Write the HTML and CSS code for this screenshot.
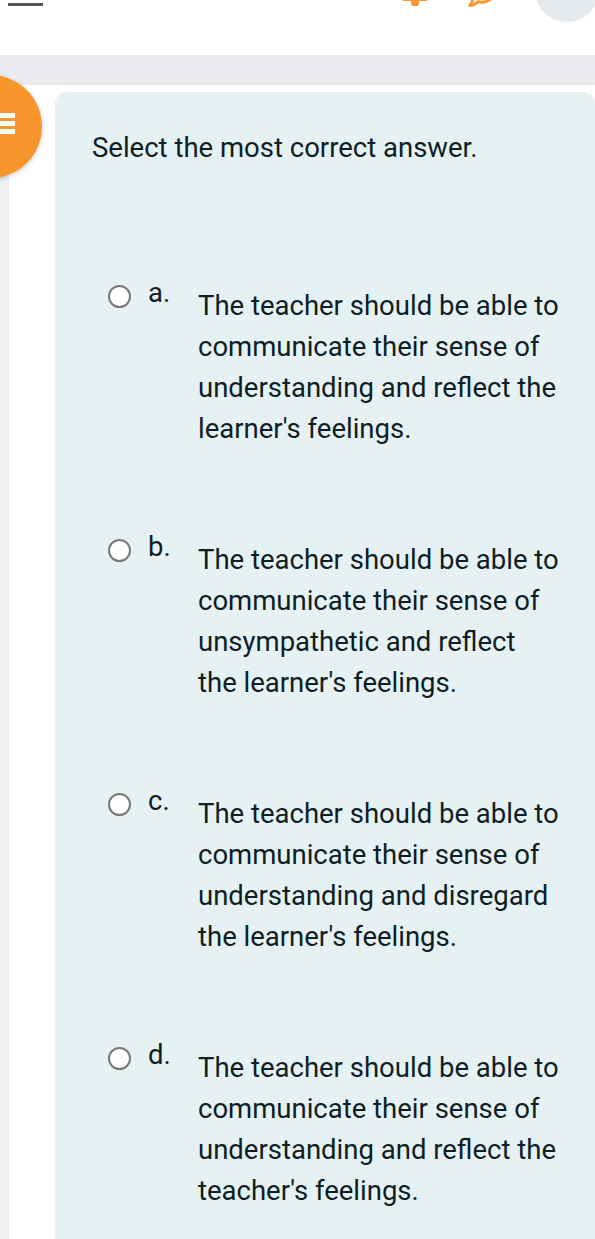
FILE: index.html
```html
<!DOCTYPE html>
<html lang="en">
<head>
  <meta charset="UTF-8">
  <meta name="viewport" content="width=device-width, initial-scale=1.0">
  <title>Quiz question</title>
  <link rel="stylesheet" href="styles.css">
</head>
<body>
  <header class="topbar">
    <div class="topbar-row">
      <div class="menu-btn">
        <span></span><span></span><span></span>
      </div>
      <div class="top-icons">
        <!-- bell -->
        <svg class="bell" width="28" height="28" viewBox="0 0 28 28">
          <path d="M14 2c-5 0-8 3.6-8 8.5v6.5l-4 4.5v1.5h24v-1.5l-4-4.5v-6.5c0-4.9-3-8.5-8-8.5z" fill="#f7962d"/>
          <rect x="10" y="22" width="8" height="6" rx="3" fill="#f7962d"/>
        </svg>
        <!-- chat -->
        <svg class="chat" width="31" height="28" viewBox="0 0 31 28">
          <path d="M4 26.5c1.5-2 2.6-4 2.8-6.2C4.4 18.4 3 15.6 3 12.6 3 6.5 8.6 2 15.5 2S28 6.5 28 12.6 22.4 23.2 15.5 23.2c-1.3 0-2.5-.1-3.6-.4C9.6 25 7 26.2 4 26.5z" fill="none" stroke="#f7962d" stroke-width="3" stroke-linejoin="round"/>
        </svg>
        <div class="avatar"></div>
      </div>
    </div>
  </header>

  <div class="band"></div>

  <div class="page">
    <div class="side"></div>
    <main class="panel">
      <div class="quiz-badge">
        <span></span><span></span><span></span>
      </div>

      <section class="card">
        <p class="prompt">Select the most correct answer.</p>

        <div class="answers">
          <label class="answer">
            <span class="radio"></span>
            <span class="letter">a.</span>
            <span class="answer-text">The teacher should be able to<br>communicate their sense of<br>understanding and reflect the<br>learner's feelings.</span>
          </label>

          <label class="answer">
            <span class="radio"></span>
            <span class="letter">b.</span>
            <span class="answer-text">The teacher should be able to<br>communicate their sense of<br>unsympathetic and reflect<br>the learner's feelings.</span>
          </label>

          <label class="answer">
            <span class="radio"></span>
            <span class="letter">c.</span>
            <span class="answer-text">The teacher should be able to<br>communicate their sense of<br>understanding and disregard<br>the learner's feelings.</span>
          </label>

          <label class="answer">
            <span class="radio"></span>
            <span class="letter">d.</span>
            <span class="answer-text">The teacher should be able to<br>communicate their sense of<br>understanding and reflect the<br>teacher's feelings.</span>
          </label>
        </div>
      </section>
    </main>
  </div>
</body>
</html>
```

FILE: styles.css
```css
body {
  margin: 0;
  background-color: #fff;
  font-family: Roboto, "Noto Sans", sans-serif;
  color: #0e1e24;
}

.topbar {
  height: 55px;
  overflow: hidden;
  background-color: #fff;
}

.topbar-row {
  height: 64px;
  margin-top: -42px;
  display: flex;
  align-items: center;
  justify-content: space-between;
  padding-left: 8px;
}

.menu-btn {
  width: 35px;
  height: 26px;
  display: flex;
  flex-direction: column;
  justify-content: space-between;
  margin-top: 6px;
}

.menu-btn span {
  height: 3px;
  background-color: #555;
}

.top-icons {
  display: flex;
  align-items: center;
  margin-right: -4px;
}

.bell {
  margin-top: 4px;
}

.chat {
  margin-left: 37px;
  margin-top: 6px;
}

.avatar {
  width: 64px;
  height: 64px;
  border-radius: 50%;
  background-color: #e6e9ee;
  margin-left: 38px;
}

.band {
  height: 30px;
  background-color: #e9ebef;
}

.page {
  display: flex;
}

.side {
  width: 9px;
  background-color: #eef0f4;
}

.panel {
  flex: 1;
  position: relative;
  background-color: #fff;
  padding: 7px 0 0 46px;
}

/* orange badge hanging off the left edge */
.quiz-badge {
  position: absolute;
  left: -70px;
  top: -10px;
  width: 103px;
  height: 103px;
  border-radius: 50%;
  background-color: #f7962d;
  box-shadow: 0 2px 5px rgba(0, 0, 0, 0.18);
  display: flex;
  flex-direction: column;
  gap: 3px;
  padding: 38px 0 0 46px;
  box-sizing: border-box;
}

.quiz-badge span {
  width: 30px;
  height: 5px;
  background-color: #fff;
}

.card {
  background-color: #e6f1f4;
  border-radius: 12px 12px 0 0;
  padding: 40px 0 60px 37px;
  min-height: 1080px;
  box-sizing: border-box;
}

.prompt {
  margin: 0;
  font-size: 27.5px;
  line-height: 32px;
}

.answers {
  margin-top: 121px;
  margin-left: 16px;
  display: flex;
  flex-direction: column;
  gap: 90px;
}

.answer {
  display: flex;
  align-items: flex-start;
  font-size: 27.5px;
}

.radio {
  width: 23px;
  height: 23px;
  box-sizing: border-box;
  border: 2px solid #787878;
  border-radius: 50%;
  background-color: #fff;
  flex-shrink: 0;
}

.letter {
  width: 50px;
  margin-left: 17px;
  line-height: 24px;
  margin-top: -4px;
}

.answer-text {
  line-height: 41px;
  white-space: nowrap;
}
```
